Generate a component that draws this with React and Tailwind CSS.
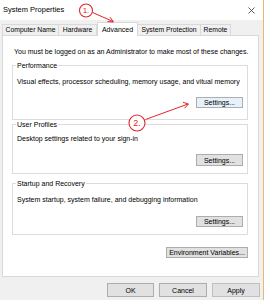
export default function App() {
  const font = "font-['Segoe_UI','Liberation_Sans',Arial,sans-serif]";
  const tabs = [
    { label: "Computer Name", w: "w-[57px]" },
    { label: "Hardware", w: "w-[38px]" },
    { label: "Advanced", w: "w-[41px]", active: true },
    { label: "System Protection", w: "w-[63px]" },
    { label: "Remote", w: "w-[30px]" },
  ];
  const btn =
    "h-[11px] flex items-center justify-center border border-[#adadad] bg-[#e1e1e1] text-[7px] leading-none text-black";
  return (
    <div className={`relative w-[265px] h-[300px] bg-white overflow-hidden ${font} text-black`}>
      <div className="w-[264px] h-full border-r border-[#eab676] flex flex-col">
        {/* title bar */}
        <div className="h-[20px] bg-white flex items-center justify-between pl-[3px] pr-[8px]">
          <span className="text-[7.5px] leading-none">System Properties</span>
          <svg width="7" height="7" viewBox="0 0 7 7">
            <path d="M0.5 0.5 L6.5 6.5 M6.5 0.5 L0.5 6.5" stroke="#333" strokeWidth="0.8" />
          </svg>
        </div>
        {/* body */}
        <div className="flex-1 bg-[#f0f0f0] flex flex-col">
          {/* tabs */}
          <div className="h-[15px] flex items-end pl-[2px] relative z-10">
            {tabs.map((t) =>
              t.active ? (
                <div
                  key={t.label}
                  className={`${t.w} h-[14px] -mb-px bg-white border border-b-0 border-[#d9d9d9] flex items-center justify-center text-[7px] leading-none`}
                >
                  {t.label}
                </div>
              ) : (
                <div
                  key={t.label}
                  className={`${t.w} h-[11px] bg-[#f0f0f0] border border-b-0 border-l-0 first:border-l border-[#d9d9d9] flex items-center justify-center text-[6.8px] leading-none`}
                >
                  {t.label}
                </div>
              )
            )}
          </div>
          {/* panel */}
          <div className="ml-[2px] w-[257px] h-[242px] bg-white border border-[#d9d9d9] flex flex-col pl-[9px] pr-[10px]">
            <div className="mt-[11px] pl-[2px] text-[7px] leading-[9px] whitespace-nowrap">
              You must be logged on as an Administrator to make most of these changes.
            </div>
            <fieldset className="mt-[5px] border border-[#dcdcdc] px-[4px] pb-[11px]">
              <legend className="text-[7px] leading-[9px] px-[1px] -ml-[1px]">Performance</legend>
              <div className="mt-[7px] text-[7px] leading-[9px] whitespace-nowrap">
                Visual effects, processor scheduling, memory usage, and vitual memory
              </div>
              <div className="mt-[11px] flex justify-end">
                <div className={`${btn} w-[47px] border-[#0078d7] bg-[#e5f1fb]`}>Settings...</div>
              </div>
            </fieldset>
            <fieldset className="border border-[#dcdcdc] px-[4px] pb-[7px]">
              <legend className="text-[7px] leading-[9px] px-[1px] -ml-[1px]">User Profiles</legend>
              <div className="mt-[5px] text-[7px] leading-[9px]">Desktop settings related to your sign-in</div>
              <div className="mt-[11px] flex justify-end">
                <div className={`${btn} w-[47px] h-[12px]`}>Settings...</div>
              </div>
            </fieldset>
            <fieldset className="mt-[5px] border border-[#dcdcdc] px-[4px] pb-[7px]">
              <legend className="text-[7px] leading-[9px] px-[1px] -ml-[1px]">Startup and Recovery</legend>
              <div className="mt-[7px] text-[7px] leading-[9px]">
                System startup, system failure, and debugging information
              </div>
              <div className="mt-[12px] flex justify-end">
                <div className={`${btn} w-[47px]`}>Settings...</div>
              </div>
            </fieldset>
            <div className="mt-[12px] flex justify-end">
              <div className={`${btn} w-[82px]`}>Environment Variables...</div>
            </div>
          </div>
          {/* bottom buttons */}
          <div className="mt-[6px] flex justify-end gap-[5px] pr-[3px]">
            <div className={`${btn} w-[47px] h-[14px]`}>OK</div>
            <div className={`${btn} w-[48px] h-[14px]`}>Cancel</div>
            <div className={`${btn} w-[48px] h-[14px] border-[#bfbfbf] bg-[#cccccc] text-[#a0a0a0]`}>Apply</div>
          </div>
        </div>
      </div>
      {/* annotations */}
      <svg className="absolute inset-0 pointer-events-none z-20" width="265" height="300" viewBox="0 0 265 300">
        <circle cx="86" cy="10.5" r="6.5" fill="white" stroke="#e3242b" strokeWidth="1.1" />
        <text x="86" y="13.3" textAnchor="middle" fontSize="8" fontFamily="Liberation Sans, Arial, sans-serif" fill="#e3242b">1.</text>
        <path d="M92.5 12.5 L113 21.5" stroke="#e3242b" strokeWidth="1" fill="none" />
        <path d="M113.5 22 L107.5 21.6 M113.5 22 L110 17.2" stroke="#e3242b" strokeWidth="1" fill="none" />
        <circle cx="137" cy="123" r="8" fill="white" stroke="#e3242b" strokeWidth="1.1" />
        <text x="137" y="126.3" textAnchor="middle" fontSize="9" fontFamily="Liberation Sans, Arial, sans-serif" fill="#e3242b">2.</text>
        <path d="M145.5 119.5 L188 104" stroke="#e3242b" strokeWidth="1" fill="none" />
        <path d="M188.5 104 L183 102.3 M188.5 104 L184.5 108.2" stroke="#e3242b" strokeWidth="1" fill="none" />
      </svg>
    </div>
  );
}
